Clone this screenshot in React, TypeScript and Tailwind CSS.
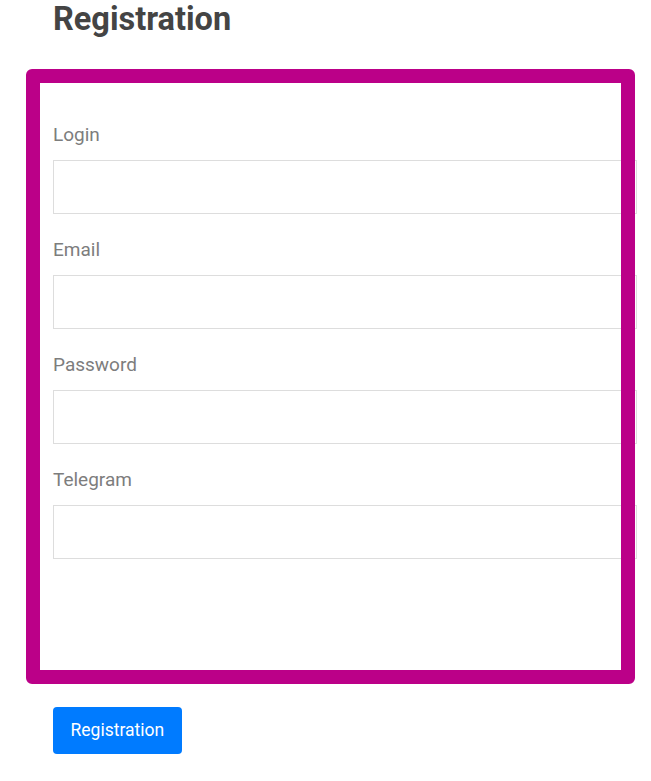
export default function App() {
  const fields = ["Login", "Email", "Password", "Telegram"];

  return (
    <div className="min-h-screen bg-white font-['Roboto','Liberation_Sans',sans-serif]">
      <h1 className="pl-[53px] text-[32.5px] font-bold leading-[38px] text-[#444]">
        Registration
      </h1>

      {/* Form block with highlight frame on top */}
      <div className="relative mx-[26px] mt-[31px] h-[615px] w-[609px]">
        <form className="pl-[27px] pt-[54px]">
          {fields.map((field) => (
            <div key={field} className="mb-[24px]">
              <label className="mb-[13px] block text-[19px] leading-6 text-[#7d7d7d]">
                {field}
              </label>
              <input
                type={field === "Password" ? "password" : "text"}
                className="block h-[54px] w-[584px] border border-[#ddd] bg-white px-3 outline-none"
              />
            </div>
          ))}
        </form>
        <div className="pointer-events-none absolute inset-0 rounded-md border-[14px] border-[#bb0088]" />
      </div>

      <div className="pl-[53px] pt-[23px]">
        <button className="h-[47px] rounded bg-[#007bff] px-[17.5px] text-[17.5px] text-white">
          Registration
        </button>
      </div>
    </div>
  );
}
